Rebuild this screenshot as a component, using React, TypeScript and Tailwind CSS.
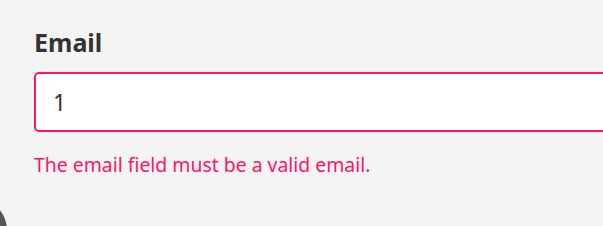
import { useState } from 'react';

export default function App() {
  const [email, setEmail] = useState('1');

  return (
    <div className="relative w-[603px] h-[226px] overflow-hidden bg-[#f4f4f4] font-['Noto_Sans',sans-serif]">
      <div className="pt-[24px] pl-[34px]">
        <label htmlFor="email" className="block text-[25px] font-bold leading-[36px] text-[#333333]">
          Email
        </label>
        <input
          id="email"
          type="text"
          value={email}
          onChange={(e) => setEmail(e.target.value)}
          className="mt-[12px] block w-[620px] h-[60px] px-[17px] rounded-[5px] border-2 border-[#ff1466] bg-white text-[23px] text-[#333333] outline-none"
        />
        <p className="mt-[20px] text-[19.4px] leading-[26px] text-[#ff1466]">
          The email field must be a valid email.
        </p>
      </div>

      {/* floating button peeking from the corner */}
      <div className="absolute left-[-55px] top-[199px] w-[62px] h-[62px] rounded-full bg-[#555555]" />
    </div>
  );
}
